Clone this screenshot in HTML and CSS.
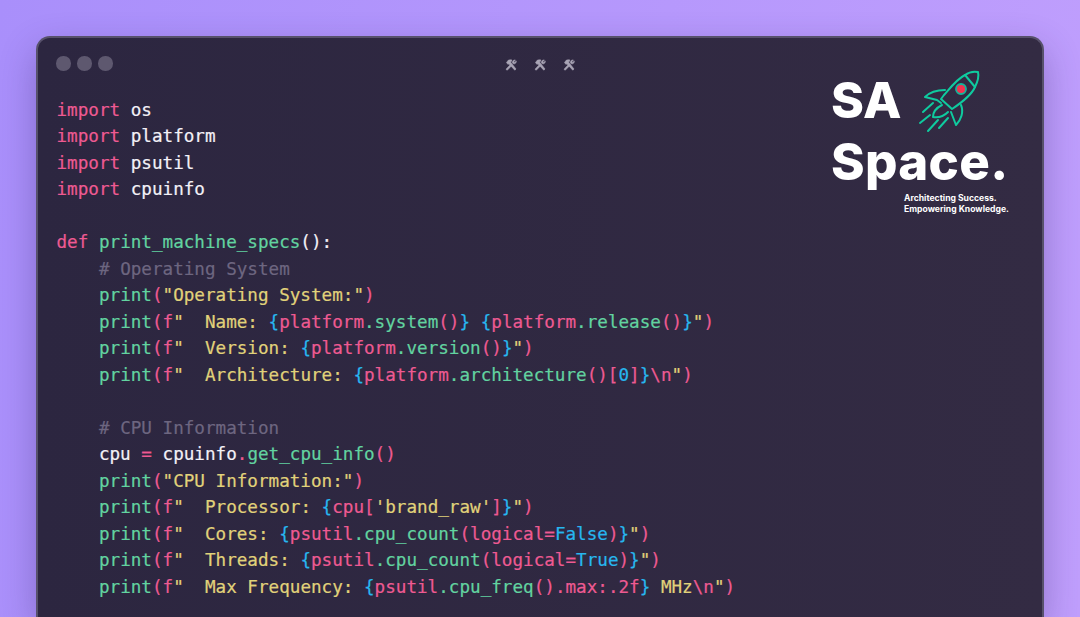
FILE: index.html
```html
<!DOCTYPE html>
<html lang="en">
<head>
<meta charset="utf-8">
<title>Machine specs</title>
<link rel="stylesheet" href="styles.css">
</head>
<body>
<svg class="defs" width="0" height="0" aria-hidden="true"><symbol id="tool" viewBox="0 0 12 12"><path d="M1.500 3.500 L3.500 1 L6.500 .8 L7 1.800 L5.500 3 L11 10 L9.800 11.200 L3.800 4.800 L3 5.500 Z" fill="currentColor" stroke="currentColor" stroke-width=".6"/><path d="M1 10.200 L6 5 L7.200 6.200 L2.200 11.300 Z" fill="currentColor" stroke="currentColor" stroke-width=".6"/><path d="M7.500 4 C7 2.300 8.500 .6 10.400 1 L9 2.500 L9.800 3.400 L11.300 2 C11.600 3.800 10 5.200 8.300 4.800 Z" fill="currentColor" stroke="currentColor" stroke-width=".6"/></symbol></svg>
<main class="window">
<header class="titlebar">
<div class="dots"><i></i><i></i><i></i></div>
<div class="tools"><svg class="tool"><use href="#tool"/></svg><svg class="tool"><use href="#tool"/></svg><svg class="tool"><use href="#tool"/></svg></div>
</header>
<aside class="logo">
<div class="logo-row"><span class="sa">SA</span>
<svg class="rocket" viewBox="915 65 70 72" width="70" height="72" fill="none" stroke="#0fcb9f" stroke-width="2" stroke-linecap="round" stroke-linejoin="round">
<path d="M978 72 C973 71 969 72 965 75 C957 79 951 87 944 95 L941 99 L952 109 C964 101 972 94 975 87 C978 81 979 76 978 72 Z"/>
<path d="M965 75 L975 87"/>
<path d="M945 90 C936 90 930 92 925 97 L937 100 L941 103"/>
<path d="M961 105 C964 112 961 120 956 125 L951 112"/>
<path d="M942 105 C936 108 933 112 933 117 C939 118 944 116 948 112"/>
<circle cx="961" cy="89" r="5" fill="#f5304f" stroke="#12b59b" stroke-width="1.800"/>
<path d="M933 103 L923 112"/><path d="M930 115 L920 123"/><path d="M938 120 L928 131"/><path d="M948 118 L939 128"/>
</svg></div>
<div class="space">Space.</div>
<p class="tag">Architecting Success.<br>Empowering Knowledge.</p>
</aside>
<pre class="code"><span class="k">import</span> os
<span class="k">import</span> platform
<span class="k">import</span> psutil
<span class="k">import</span> cpuinfo

<span class="k">def</span> <span class="g">print_machine_specs</span><span class="w">():</span>
    <span class="c"># Operating System</span>
    <span class="g">print</span><span class="k">(</span><span class="y">"Operating System:"</span><span class="k">)</span>
    <span class="g">print</span><span class="k">(f</span><span class="y">"  Name: </span><span class="b">{</span><span class="k">platform</span><span class="g">.system</span><span class="k">()</span><span class="b">}</span> <span class="b">{</span><span class="k">platform</span><span class="g">.release</span><span class="k">()</span><span class="b">}</span><span class="y">"</span><span class="k">)</span>
    <span class="g">print</span><span class="k">(f</span><span class="y">"  Version: </span><span class="b">{</span><span class="k">platform</span><span class="g">.version</span><span class="k">()</span><span class="b">}</span><span class="y">"</span><span class="k">)</span>
    <span class="g">print</span><span class="k">(f</span><span class="y">"  Architecture: </span><span class="b">{</span><span class="k">platform</span><span class="g">.architecture</span><span class="k">()[</span><span class="b">0</span><span class="k">]</span><span class="b">}</span><span class="k">\n</span><span class="y">"</span><span class="k">)</span>

    <span class="c"># CPU Information</span>
    cpu <span class="k">=</span> cpuinfo<span class="k">.</span><span class="g">get_cpu_info</span><span class="k">()</span>
    <span class="g">print</span><span class="k">(</span><span class="y">"CPU Information:"</span><span class="k">)</span>
    <span class="g">print</span><span class="k">(f</span><span class="y">"  Processor: </span><span class="b">{</span><span class="k">cpu[</span><span class="y">'brand_raw'</span><span class="k">]</span><span class="b">}</span><span class="y">"</span><span class="k">)</span>
    <span class="g">print</span><span class="k">(f</span><span class="y">"  Cores: </span><span class="b">{</span><span class="k">psutil</span><span class="g">.cpu_count</span><span class="k">(logical=</span><span class="b">False</span><span class="k">)</span><span class="b">}</span><span class="y">"</span><span class="k">)</span>
    <span class="g">print</span><span class="k">(f</span><span class="y">"  Threads: </span><span class="b">{</span><span class="k">psutil</span><span class="g">.cpu_count</span><span class="k">(logical=</span><span class="b">True</span><span class="k">)</span><span class="b">}</span><span class="y">"</span><span class="k">)</span>
    <span class="g">print</span><span class="k">(f</span><span class="y">"  Max Frequency: </span><span class="b">{</span><span class="k">psutil</span><span class="g">.cpu_freq</span><span class="k">()</span><span class="k">.max:.2f</span><span class="b">}</span><span class="y"> MHz</span><span class="k">\n</span><span class="y">"</span><span class="k">)</span></pre>
</main>
</body>
</html>
```
FILE: styles.css
```css
* { box-sizing: border-box; }
html, body { margin: 0; height: 617px; overflow: hidden; }
body {
  background: linear-gradient(100deg, #a98ffb 0%, #c09ffd 100%);
  padding: 36px 36px 0;
}
.defs { position: absolute; }
.window {
  position: relative;
  height: 581px;
  background: linear-gradient(90deg, #2c2640, #332b43);
  border: 2px solid #57516b;
  border-bottom: 0;
  border-radius: 14px 14px 0 0;
  box-shadow: 0 14px 36px rgba(50, 30, 100, .32);
  padding: 0 18.5px;
}
.titlebar { display: grid; grid-template-columns: 1fr auto 1fr; height: 51px; align-items: center; }
.dots { display: flex; gap: 6.5px; margin-left: -.5px; }
.dots i { width: 14.5px; height: 14.5px; border-radius: 50%; background: #5e586f; }
.tools { display: flex; gap: 17px; color: #a9a5b5; margin-top: 2px; }
.tool { width: 12px; height: 12px; display: block; }
.code {
  margin: 7.5px 0 0;
  font: 17.63px/26.5px "DejaVu Sans Mono", monospace;
  -webkit-text-stroke: .2px currentColor;
  color: #f3f1f7;
}
.k { color: #ee5a92; }
.g { color: #62d3a0; }
.y { color: #e1d27a; }
.b { color: #27b7ef; }
.c { color: #6d6680; }
.w { color: #f3f1f7; }
.logo {
  position: absolute; left: 793px; top: 30px;
  color: #fff; font-family: "Inter", sans-serif; font-weight: 800;
}
.logo-row { display: flex; align-items: flex-start; height: 64px; }
.sa { font-size: 50px; line-height: 64px; width: 84px; }
.rocket { margin-top: -3px; }
.space { font-size: 51px; line-height: 62px; letter-spacing: .3px; margin-top: -1px; }
.tag { margin: 0 0 0 73px; font-size: 8.6px; line-height: 11px; font-weight: 700; white-space: nowrap; }
```
